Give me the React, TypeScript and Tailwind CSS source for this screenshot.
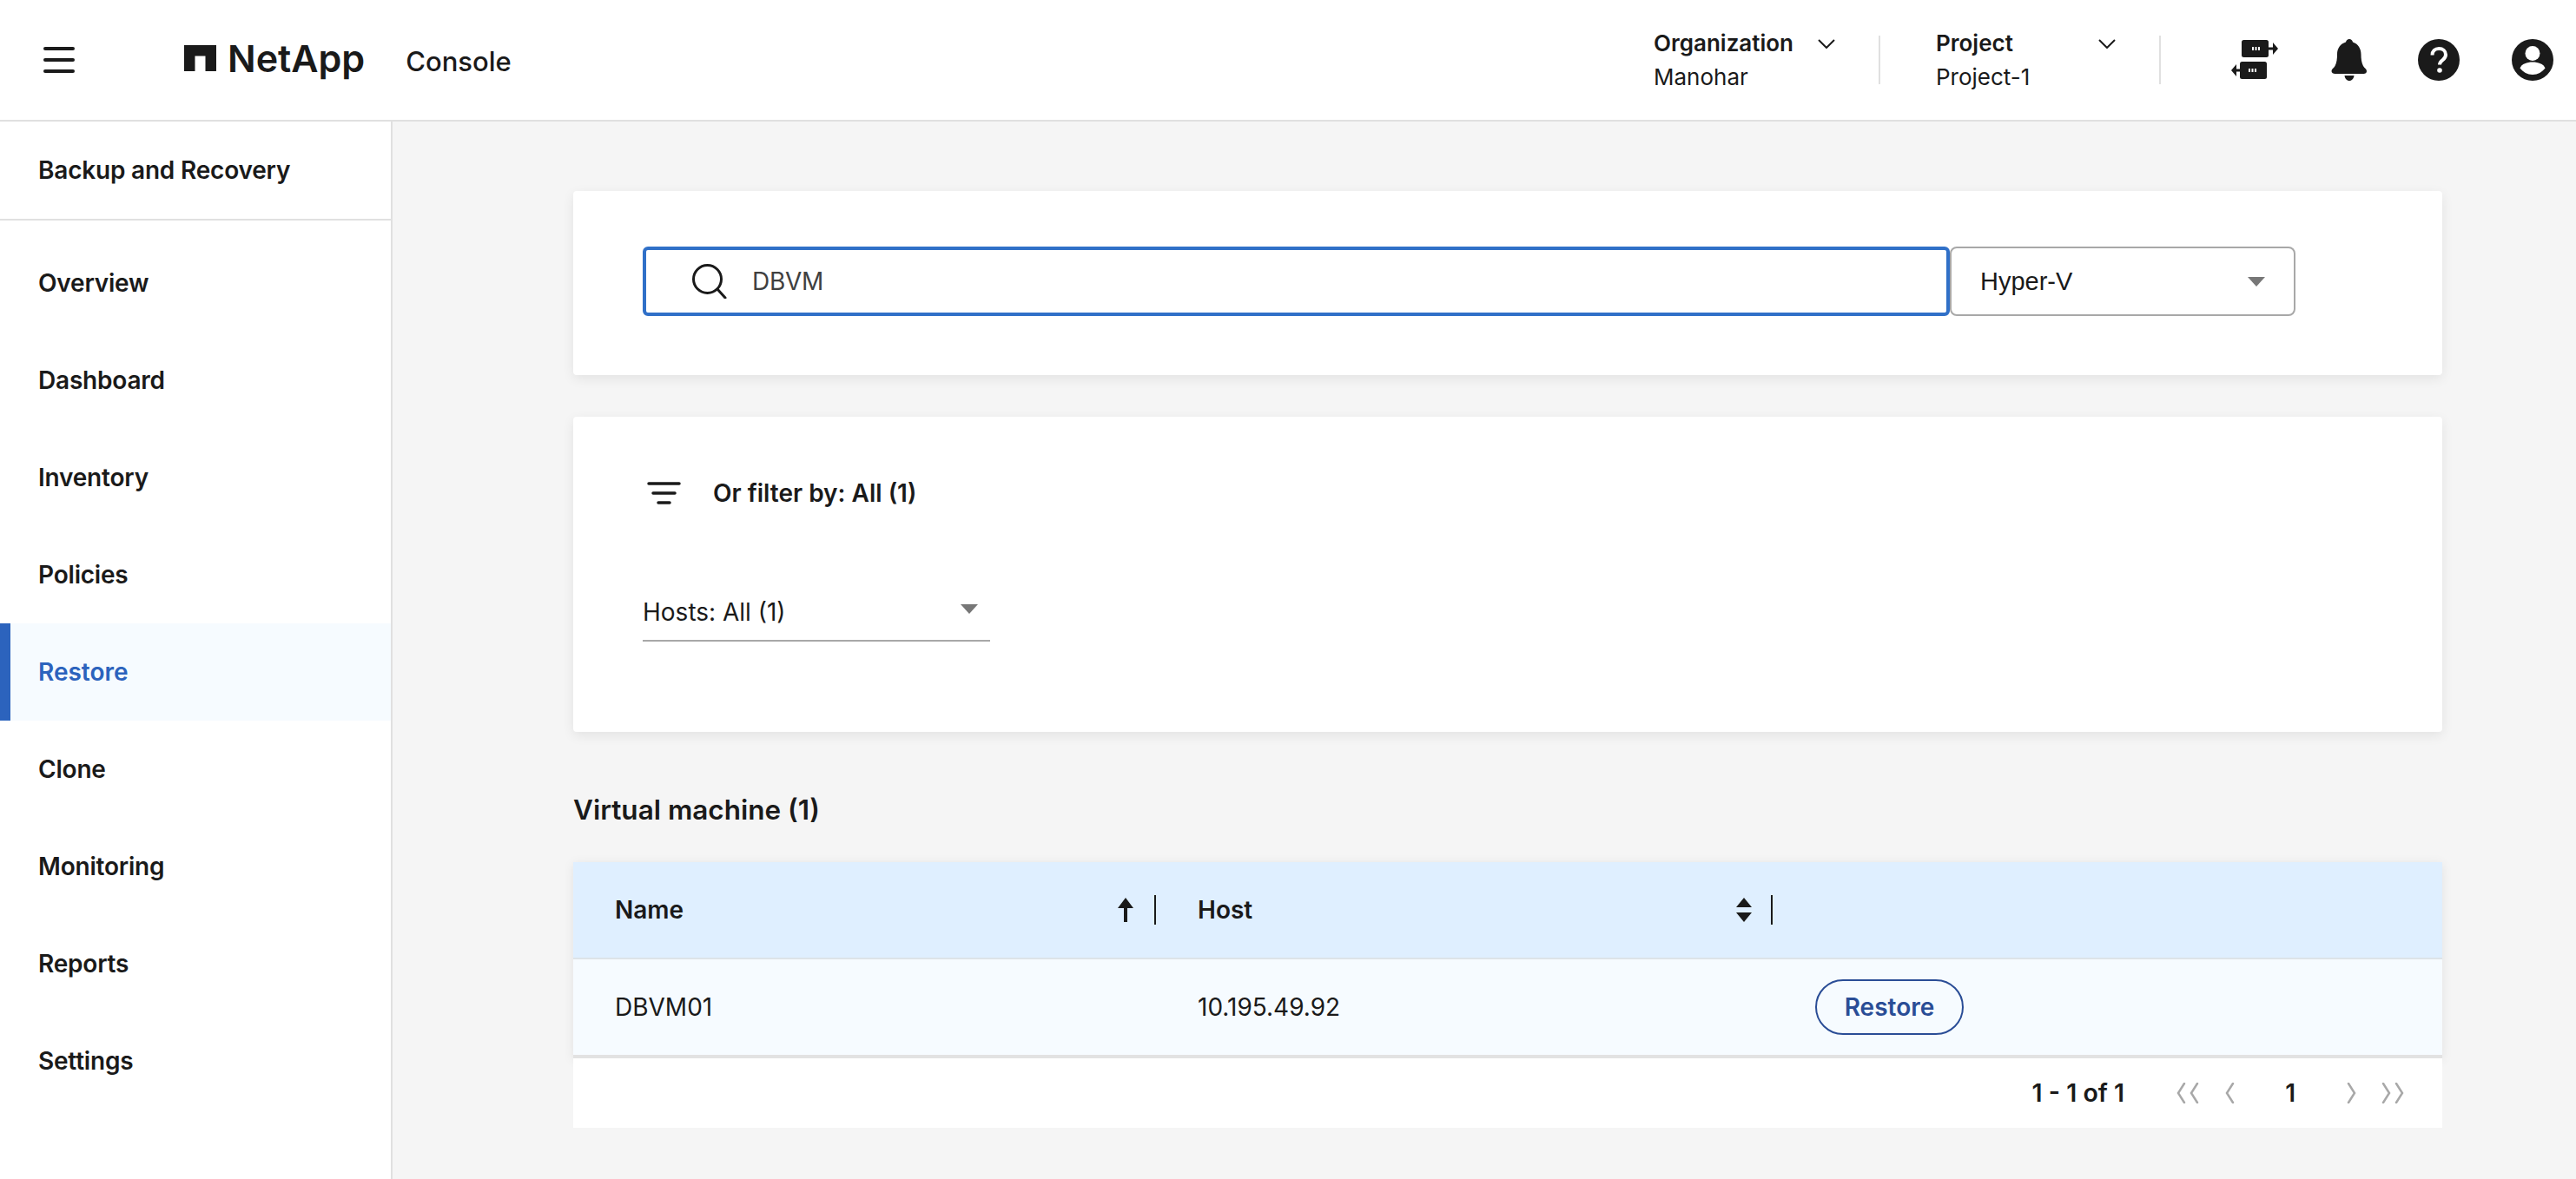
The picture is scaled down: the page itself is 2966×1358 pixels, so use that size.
const navItems = ['Overview', 'Dashboard', 'Inventory', 'Policies', 'Restore', 'Clone', 'Monitoring', 'Reports', 'Settings'];

function Triangle() {
  return (
    <svg width="20" height="11" viewBox="0 0 20 11">
      <path d="M0 0h20L10 11z" fill="#777777" />
    </svg>
  );
}

function Caret() {
  return (
    <svg className="mt-[13px]" width="20" height="11" viewBox="0 0 20 11" fill="none" stroke="#1a1a1a" strokeWidth="2">
      <path d="M1 1l9 9 9-9" />
    </svg>
  );
}

function ConnectorIcon() {
  return (
    <svg width="54" height="46" viewBox="0 0 54 46" fill="#1a1a1a">
      <rect x="12" y="0" width="31" height="20" rx="2.500" />
      <path d="M43 8.500h5V3l6 7-6 7v-5.500h-5z" />
      <rect x="10" y="25" width="31" height="20" rx="2.500" />
      <path d="M10 33.500H6V28l-6 7 6 7v-5.500h4z" />
      <g fill="#ffffff">
        <rect x="24" y="8" width="2" height="4" />
        <rect x="27.500" y="8" width="2" height="4" />
        <rect x="31" y="8" width="2" height="4" />
        <rect x="20" y="33" width="2" height="4" />
        <rect x="23.500" y="33" width="2" height="4" />
        <rect x="27" y="33" width="2" height="4" />
      </g>
    </svg>
  );
}

function BellIcon() {
  return (
    <svg width="42" height="48" viewBox="0 0 42 48" fill="#1a1a1a">
      <path d="M21 0c2 0 3.500 1.500 4 3.500 6 2 9.500 7.500 9.500 14 0 5 .5 10 2.500 13.500 1.500 2.500 4 3.500 4 6 0 2-1.500 3-3.500 3h-33C2.500 40 .5 39 .5 37c0-2.500 2.500-3.500 4-6C6.500 27.500 7 22.500 7 17.500c0-6.500 3.500-12 10-14C17.500 1.500 19 0 21 0z" />
      <path d="M15.500 42h11c-.5 3.500-2.500 6-5.500 6s-5-2.500-5.500-6z" />
    </svg>
  );
}

function HelpIcon() {
  return (
    <svg width="48" height="48" viewBox="0 0 48 48">
      <circle cx="24" cy="24" r="24" fill="#1a1a1a" />
      <path d="M16.500 18.500c0-4.500 3.200-7.500 7.700-7.500s7.800 2.800 7.800 7c0 3-1.600 4.800-3.800 6.300-2.300 1.600-3.200 2.500-3.200 5.200" fill="none" stroke="#ffffff" strokeWidth="4" />
      <circle cx="25" cy="36" r="2.800" fill="#ffffff" />
    </svg>
  );
}

function UserIcon() {
  return (
    <svg width="48" height="48" viewBox="0 0 48 48">
      <circle cx="24" cy="24" r="24" fill="#1a1a1a" />
      <circle cx="24" cy="16.500" r="8.500" fill="#ffffff" />
      <path d="M9.500 33.500c2-5 8-7 14.500-7s12.500 2 14.500 7C35 38 30 41 24 41s-11-3-14.500-7.500z" fill="#ffffff" />
    </svg>
  );
}

function Chevrons({ dir, count }: { dir: 'left' | 'right'; count: number }) {
  const d = dir === 'left' ? 'M9 1 2 12l7 11' : 'M2 1l7 11-7 11';
  return (
    <div className="flex gap-[4px]">
      {Array.from({ length: count }).map((_, i) => (
        <svg key={i} width="11" height="24" viewBox="0 0 11 24" fill="none" stroke="#a8a8a8" strokeWidth="2.500" strokeLinecap="round">
          <path d={d} />
        </svg>
      ))}
    </div>
  );
}

export default function App() {
  return (
    <div className="flex h-screen w-full flex-col overflow-hidden bg-[#f5f5f5] font-['Inter',sans-serif] text-[#1a1a1a]">
      {/* Header */}
      <header className="flex h-[140px] shrink-0 items-center border-b-2 border-[#e0e0e0] bg-white">
        <div className="ml-[50px] flex w-[36px] flex-col gap-[9px]">
          <span className="h-[4px] rounded-full bg-[#1a1a1a]" />
          <span className="h-[4px] rounded-full bg-[#1a1a1a]" />
          <span className="h-[4px] rounded-full bg-[#1a1a1a]" />
        </div>
        <svg className="mb-[4px] ml-[126px]" width="37" height="30" viewBox="0 0 37 30" fill="#1a1a1a">
          <path d="M0 0h37v30H24.500V12.500h-12V30H0z" />
        </svg>
        <span className="mb-[4px] ml-[13px] text-[43px] leading-none font-semibold">NetApp</span>
        <span className="mt-[3px] ml-[47px] text-[31px] leading-none font-medium">Console</span>

        <div className="ml-auto flex items-center">
          <div className="flex w-[209px] justify-between self-start">
            <div>
              <div className="text-[26px] leading-[36px] font-semibold">Organization</div>
              <div className="mt-[3px] text-[26px] leading-[36px]">Manohar</div>
            </div>
            <Caret />
          </div>
          <span className="ml-[50px] h-[56px] w-[2px] bg-[#e0e0e0]" />
          <div className="ml-[64px] flex w-[207px] justify-between self-start">
            <div>
              <div className="text-[26px] leading-[36px] font-semibold">Project</div>
              <div className="mt-[3px] text-[26px] leading-[36px]">Project-1</div>
            </div>
            <Caret />
          </div>
          <span className="ml-[50px] h-[56px] w-[2px] bg-[#e0e0e0]" />
          <div className="mr-[26px] ml-[81px] flex items-center">
            <ConnectorIcon />
            <div className="ml-[61px]">
              <BellIcon />
            </div>
            <div className="ml-[58px]">
              <HelpIcon />
            </div>
            <div className="ml-[60px]">
              <UserIcon />
            </div>
          </div>
        </div>
      </header>

      <div className="flex min-h-0 flex-1">
        {/* Sidebar */}
        <aside className="w-[452px] shrink-0 border-r-2 border-[#e0e0e0] bg-white">
          <div className="flex h-[114px] items-center border-b-2 border-[#e0e0e0] pl-[44px] text-[28px] font-semibold tracking-[-0.2px]">
            Backup and Recovery
          </div>
          <nav className="pt-[16px]">
            {navItems.map((item) =>
              item === 'Restore' ? (
                <div key={item} className="flex h-[112px] items-center border-l-[12px] border-[#2c63bd] bg-[#f6fbff] pl-[32px] text-[28px] font-semibold text-[#2c63bd]">
                  {item}
                </div>
              ) : (
                <div key={item} className="flex h-[112px] items-center pl-[44px] text-[28px] font-semibold tracking-[-0.2px]">
                  {item}
                </div>
              ),
            )}
          </nav>
        </aside>

        {/* Content */}
        <main className="ml-[208px] w-[2152px] pt-[80px]">
          <section className="h-[212px] rounded-[4px] bg-white px-[80px] pt-[64px] shadow-[0_4px_14px_rgba(0,0,0,0.08)]">
            <div className="flex">
              <div className="flex h-[80px] w-[1505px] items-center rounded-[6px] border-[4px] border-[#3070c8] pl-[53px]">
                <svg width="40" height="40" viewBox="0 0 40 40" fill="none" stroke="#1a1a1a" strokeWidth="3" strokeLinecap="round">
                  <circle cx="17.500" cy="17.500" r="16" />
                  <path d="M29 29l9 10" />
                </svg>
                <span className="ml-[29px] text-[28px] tracking-[-0.3px] text-[#404040]">DBVM</span>
              </div>
              <div className="flex h-[80px] w-[398px] items-center justify-between rounded-[8px] border-2 border-[#a8a8a8] pr-[33px] pl-[33px]">
                <span className="mt-[1px] font-['Liberation_Sans',sans-serif] text-[29px]">Hyper-V</span>
                <Triangle />
              </div>
            </div>
          </section>

          <section className="mt-[48px] h-[363px] rounded-[4px] bg-white px-[80px] pt-[67px] shadow-[0_4px_14px_rgba(0,0,0,0.08)]">
            <div className="flex items-center pl-[5px]">
              <svg width="39" height="26" viewBox="0 0 39 26" fill="none" stroke="#1a1a1a" strokeWidth="3.500" strokeLinecap="round">
                <path d="M2 2h35M7 13h25M13 24h13" />
              </svg>
              <span className="ml-[37px] text-[28px] font-semibold">Or filter by: All (1)</span>
            </div>
            <div className="mt-[94px] flex h-[56px] w-[400px] items-start justify-between border-b-2 border-[#a8a8a8] pr-[14px]">
              <span className="text-[28px] leading-[44px]">Hosts: All (1)</span>
              <div className="mt-[13px]">
                <Triangle />
              </div>
            </div>
          </section>

          <h2 className="mt-[69px] text-[31.5px] leading-[42px] font-semibold">Virtual machine (1)</h2>

          <div className="mt-[39px]">
            <div className="shadow-[0_2px_12px_rgba(0,0,0,0.08)]">
              <div className="grid h-[112px] grid-cols-[671px_710px_1fr] border-b-2 border-[#dde3e8] bg-[#dfefff] text-[28px] font-semibold">
                <div className="flex items-center justify-between pl-[48px]">
                  <span>Name</span>
                  <div className="flex items-center">
                    <svg width="18" height="28" viewBox="0 0 18 28" fill="#1a1a1a">
                      <path d="M9 0l9 12h-7v16H7V12H0z" />
                    </svg>
                    <span className="ml-[24px] h-[34px] w-[2px] bg-[#1a1a1a]" />
                  </div>
                </div>
                <div className="flex items-center justify-between pl-[48px]">
                  <span>Host</span>
                  <div className="flex items-center">
                    <svg width="18" height="28" viewBox="0 0 18 28" fill="#1a1a1a">
                      <path d="M9 0l9 11H0zM9 28L0 17h18z" />
                    </svg>
                    <span className="ml-[22px] h-[34px] w-[2px] bg-[#1a1a1a]" />
                  </div>
                </div>
                <div />
              </div>
              <div className="grid h-[114px] grid-cols-[671px_710px_1fr] items-center border-b-[4px] border-[#e2e2e2] bg-[#f6fbff] text-[28px]">
                <div className="pl-[48px]">DBVM01</div>
                <div className="pl-[48px]">10.195.49.92</div>
                <div className="pl-[49px]">
                  <button className="h-[64px] w-[171px] rounded-full border-2 border-[#2a4d96] text-[28px] font-semibold text-[#2a4d96]">
                    Restore
                  </button>
                </div>
              </div>
            </div>
            <div className="flex h-[80px] items-center justify-end bg-white pr-[44px]">
              <span className="text-[28.5px] font-semibold">1 - 1 of 1</span>
              <div className="ml-[60px]">
                <Chevrons dir="left" count={2} />
              </div>
              <div className="ml-[30px]">
                <Chevrons dir="left" count={1} />
              </div>
              <span className="ml-[58px] text-[28px] font-semibold">1</span>
              <div className="ml-[59px]">
                <Chevrons dir="right" count={1} />
              </div>
              <div className="ml-[29px]">
                <Chevrons dir="right" count={2} />
              </div>
            </div>
          </div>
        </main>
      </div>
    </div>
  );
}
